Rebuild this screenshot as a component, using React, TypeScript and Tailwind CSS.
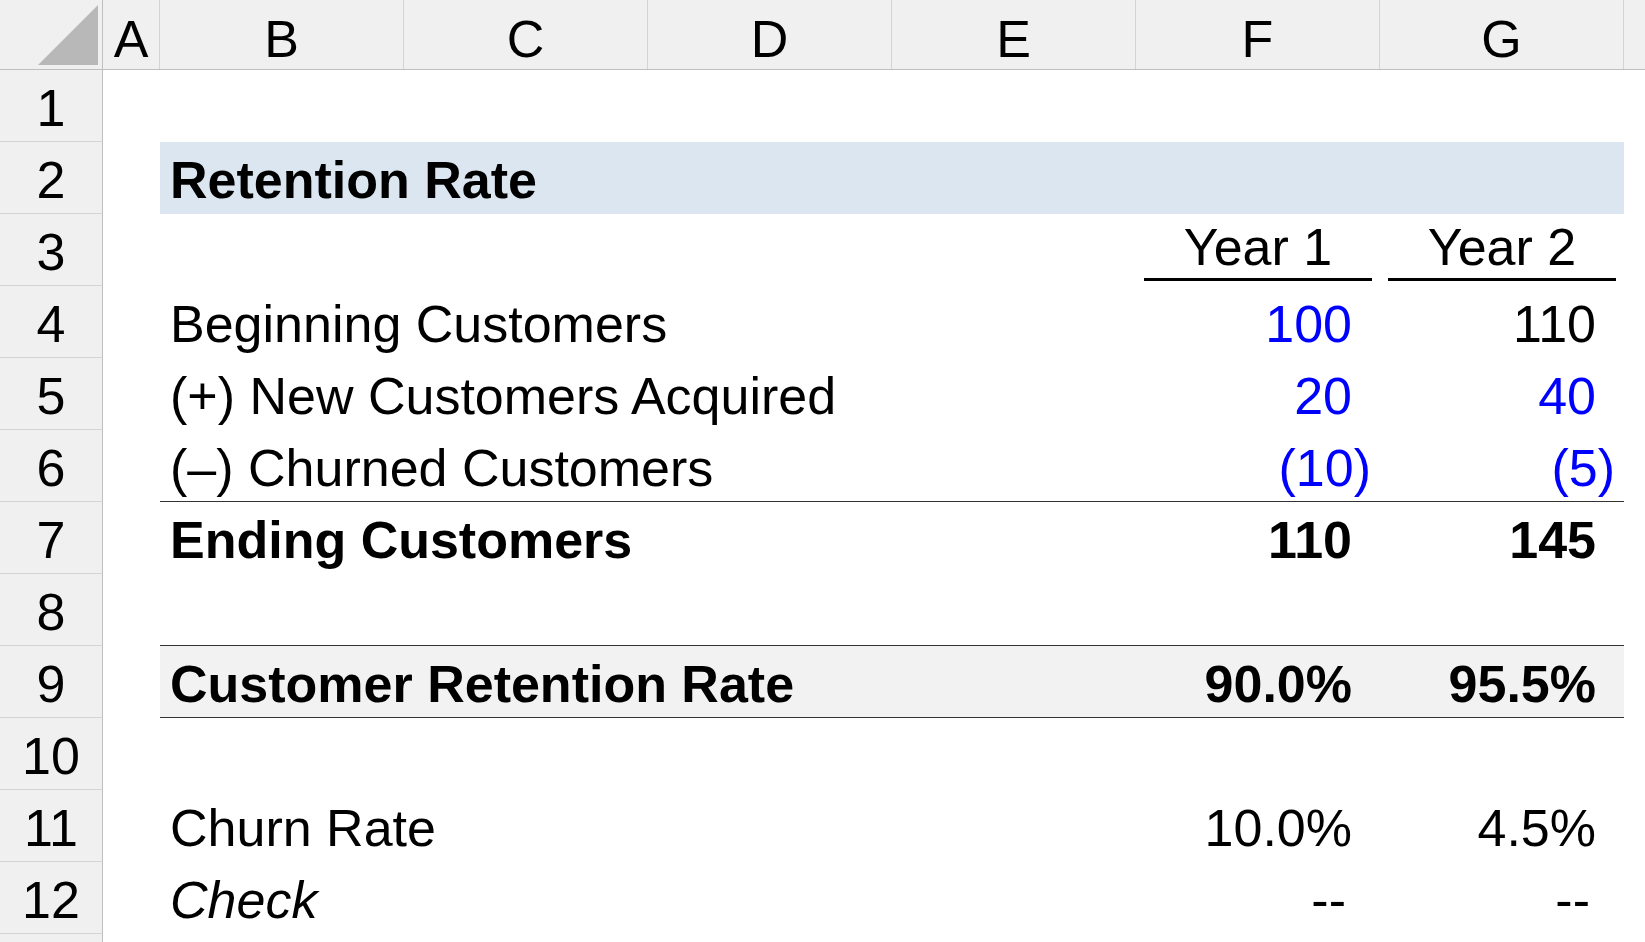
import React from "react";

const cols = ["A", "B", "C", "D", "E", "F", "G"];
const colW = [57, 244, 244, 244, 244, 244, 244];

type Row = {
  label?: string;
  lcls?: string;
  f?: React.ReactNode;
  g?: React.ReactNode;
  bg?: string;
  bottom?: boolean;
};

const blue = "text-[#0000ff]";

const rows: Row[] = [
  {},
  { label: "Retention Rate", lcls: "font-bold", bg: "bg-[#dce6f1]" },
  { f: "year", g: "year" },
  { label: "Beginning Customers", f: <span className={`${blue} pr-[28px]`}>100</span>, g: <span className="pr-[28px]">110</span> },
  { label: "(+) New Customers Acquired", f: <span className={`${blue} pr-[28px]`}>20</span>, g: <span className={`${blue} pr-[28px]`}>40</span> },
  { label: "(–) Churned Customers", f: <span className={`${blue} pr-[9px]`}>(10)</span>, g: <span className={`${blue} pr-[9px]`}>(5)</span>, bottom: true },
  { label: "Ending Customers", lcls: "font-bold", f: <span className="font-bold pr-[28px]">110</span>, g: <span className="font-bold pr-[28px]">145</span> },
  { bottom: true },
  { label: "Customer Retention Rate", lcls: "font-bold", f: <span className="font-bold pr-[28px]">90.0%</span>, g: <span className="font-bold pr-[28px]">95.5%</span>, bg: "bg-[#f2f2f2]", bottom: true },
  {},
  { label: "Churn Rate", f: <span className="pr-[28px]">10.0%</span>, g: <span className="pr-[28px]">4.5%</span> },
  { label: "Check", lcls: "italic", f: <span className="pr-[34px]">--</span>, g: <span className="pr-[34px]">--</span> },
];

export default function App() {
  return (
    <div
      className="w-[1645px] h-[942px] overflow-hidden bg-white text-black text-[52px] leading-none"
      style={{ fontFamily: '"Liberation Sans", Arial, sans-serif' }}
    >
      <div className="flex h-[70px] bg-[#f0f0f0] border-b border-[#bfbfbf]">
        <div className="w-[103px] shrink-0 border-r border-[#bfbfbf] relative">
          <svg className="absolute right-[4px] bottom-[4px]" width="60" height="60" viewBox="0 0 60 60">
            <polygon points="60,0 60,60 0,60" fill="#b8b8b8" />
          </svg>
        </div>
        {cols.map((c, i) => (
          <div
            key={c}
            style={{ width: colW[i] }}
            className="shrink-0 flex items-center justify-center pt-2 border-r border-[#d4d4d4]"
          >
            {c}
          </div>
        ))}
        <div className="flex-1" />
      </div>
      {rows.map((r, i) => (
        <div key={i} className="flex h-[72px]">
          <div className="w-[103px] shrink-0 bg-[#f0f0f0] border-r border-[#bfbfbf] border-b border-b-[#d4d4d4] flex items-center justify-center pt-1">
            {i + 1}
          </div>
          <div className="w-[57px] shrink-0" />
          <div
            className={`w-[1464px] shrink-0 flex ${r.bg ?? ""} ${r.bottom ? "border-b border-[#333]" : ""}`}
          >
            <div className={`w-[976px] shrink-0 flex items-center pl-[10px] pt-1 ${r.lcls ?? ""}`}>
              {r.label}
            </div>
            <div className="w-[244px] shrink-0 flex items-center justify-end pt-1">
              {r.f === "year" ? (
                <div className="w-full px-[8px] h-full flex items-end pb-[5px]">
                  <div className="w-full text-center border-b-[3px] border-black pb-[5px]">Year 1</div>
                </div>
              ) : (
                r.f
              )}
            </div>
            <div className="w-[244px] shrink-0 flex items-center justify-end pt-1">
              {r.g === "year" ? (
                <div className="w-full px-[8px] h-full flex items-end pb-[5px]">
                  <div className="w-full text-center border-b-[3px] border-black pb-[5px]">Year 2</div>
                </div>
              ) : (
                r.g
              )}
            </div>
          </div>
          <div className="flex-1" />
        </div>
      ))}
      <div className="flex h-[20px]">
        <div className="w-[103px] shrink-0 bg-[#f0f0f0] border-r border-[#bfbfbf]" />
      </div>
    </div>
  );
}
